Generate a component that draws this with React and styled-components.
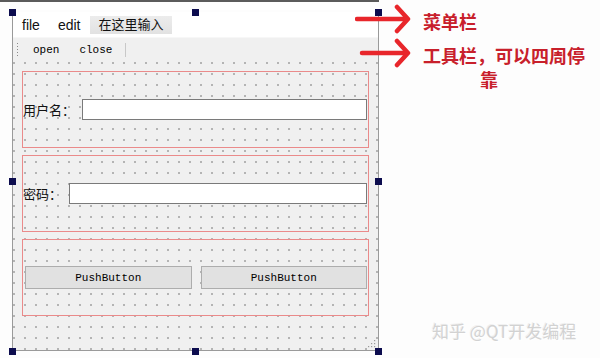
import React from "react";
import styled, { createGlobalStyle } from "styled-components";

const GlobalStyle = createGlobalStyle`
  html, body {
    margin: 0;
    padding: 0;
    background: #fdfdfd;
    font-family: "Liberation Sans", "Noto Sans CJK SC", sans-serif;
  }
`;

const handles = [
  [12, 12], [195, 12], [378, 12],
  [12, 181], [378, 181],
  [12, 351], [195, 351], [378, 351],
];

const Arrow = ({ start }) => (
  <ArrowSvg width="58" height="30" viewBox="0 0 58 30">
    <path
      d={`M${start} 15 H52 M42 3 L53 15 L42 27`}
      fill="none"
      stroke="#e8262b"
      strokeWidth="4.5"
      strokeLinecap="round"
      strokeLinejoin="round"
    />
  </ArrowSvg>
);

const Grip = () => (
  <GripSvg width="10" height="10" viewBox="0 0 10 10">
    {[[8, 1], [5, 4], [8, 4], [2, 7], [5, 7], [8, 7]].map(([x, y]) => (
      <rect key={`${x}-${y}`} x={x} y={y} width="1.2" height="1.2" fill="#9a9a9a" />
    ))}
  </GripSvg>
);

export default function App() {
  return (
    <>
      <GlobalStyle />
      <Page>
        <TopLine />
        <Stage>
          <Form>
            <MenuBar>
              <MenuItem>file</MenuItem>
              <MenuItem>edit</MenuItem>
              <MenuItem $typing>在这里输入</MenuItem>
            </MenuBar>
            <ToolBar>
              <ToolHandle />
              <ToolItem>open</ToolItem>
              <ToolItem>close</ToolItem>
              <ToolSep />
            </ToolBar>
            <Central>
              <Frame>
                <Label>用户名：</Label>
                <Input />
              </Frame>
              <Frame>
                <Label>密码：</Label>
                <Input />
              </Frame>
              <Frame $buttons>
                <PushButton>PushButton</PushButton>
                <PushButton>PushButton</PushButton>
              </Frame>
              <Grip />
            </Central>
          </Form>

          <Notes>
            <Note>
              <Arrow start={2} />
              菜单栏
            </Note>
            <Note $second>
              <Arrow start={7} />
              工具栏，可以四周停
              <Tail>靠</Tail>
            </Note>
          </Notes>

          {handles.map(([x, y]) => (
            <Handle key={`${x}-${y}`} $x={x} $y={y} />
          ))}
          <Watermark>知乎 @QT开发编程</Watermark>
        </Stage>
      </Page>
    </>
  );
}

const Page = styled.div`
  width: 600px;
  height: 358px;
  overflow: hidden;
  display: flex;
  flex-direction: column;
`;

const TopLine = styled.div`
  width: 379px;
  height: 2px;
  background: #5a5a5a;
  flex: none;
`;

const Stage = styled.div`
  position: relative;
  display: flex;
  align-items: flex-start;
  padding-left: 12px;
  flex: 1;
`;

const Form = styled.div`
  width: 365px;
  margin-top: 10px;
  border: 1px solid #9a9a9a;
  border-top: none;
  display: flex;
  flex-direction: column;
  flex: none;
`;

const MenuBar = styled.div`
  height: 25px;
  background: #fff;
  display: flex;
  align-items: center;
  gap: 2px;
  padding-left: 1px;
`;

const MenuItem = styled.div`
  height: 18px;
  line-height: 18px;
  padding: 0 8px;
  font-size: ${(p) => (p.$typing ? "13px" : "14px")};
  font-family: "Liberation Sans", "Noto Sans CJK SC", sans-serif;
  color: #111;
  background: ${(p) => (p.$typing ? "linear-gradient(#ececec, #e2e2e2)" : "transparent")};
`;

const ToolBar = styled.div`
  height: 24px;
  background: #f0f0f0;
  border-top: 1px solid #f7f7f7;
  display: flex;
  align-items: center;
  padding-left: 4px;
  box-sizing: border-box;
`;

const ToolHandle = styled.div`
  width: 1px;
  height: 14px;
  margin-right: 5px;
  background: repeating-linear-gradient(#8a8a8a 0 1px, transparent 1px 3px);
`;

const ToolItem = styled.div`
  padding: 0 10px;
  font-family: "Liberation Mono", monospace;
  font-size: 11px;
  color: #000;
`;

const ToolSep = styled.div`
  width: 1px;
  height: 14px;
  margin-left: 3px;
  background: #c8c8c8;
`;

const Central = styled.div`
  position: relative;
  height: 289px;
  box-sizing: border-box;
  padding: 10px 9px 0;
  display: flex;
  flex-direction: column;
  gap: 7px;
  background-color: #f0f0f0;
  background-image: radial-gradient(circle at 1px 1px, #b4b4b4 0.8px, transparent 1.2px);
  background-size: 11px 11px;
  background-position: 0 1px;
`;

const Frame = styled.div`
  height: 77px;
  box-sizing: border-box;
  border: 1px solid #ea8a8a;
  display: flex;
  align-items: center;
  padding: 0 1px 0 ${(p) => (p.$buttons ? "2px" : "0")};
  gap: ${(p) => (p.$buttons ? "9px" : "7px")};
`;

const Label = styled.div`
  font-family: "Noto Sans CJK SC", sans-serif;
  font-size: 13px;
  color: #111;
  white-space: nowrap;
`;

const Input = styled.div`
  flex: 1;
  height: 21px;
  box-sizing: border-box;
  background: #fff;
  border: 1px solid #7a7a7a;
`;

const PushButton = styled.div`
  flex: 1;
  height: 23px;
  box-sizing: border-box;
  background: #e1e1e1;
  border: 1px solid #adadad;
  display: flex;
  align-items: center;
  justify-content: center;
  font-family: "Liberation Mono", monospace;
  font-size: 11px;
  color: #000;
`;

const GripSvg = styled.svg`
  position: absolute;
  right: 2px;
  bottom: 1px;
`;

const Notes = styled.div`
  margin: 6px 0 0 44px;
  display: flex;
  flex-direction: column;
  gap: 8px;
`;

const Note = styled.div`
  position: relative;
  font-family: "Noto Sans CJK SC", sans-serif;
  font-weight: 700;
  font-size: 18px;
  line-height: 26px;
  color: #c8202b;
  white-space: nowrap;
  & > svg {
    top: ${(p) => (p.$second ? "-4px" : "-4px")};
  }
`;

const Tail = styled.span`
  display: block;
  margin-top: -2px;
  padding-left: 57px;
`;

const ArrowSvg = styled.svg`
  position: absolute;
  left: -68px;
`;

const Handle = styled.div`
  position: absolute;
  width: 7px;
  height: 7px;
  background: #0c0c4e;
  left: ${(p) => p.$x - 3.5}px;
  top: ${(p) => p.$y - 5.5}px;
`;

const Watermark = styled.div`
  position: absolute;
  left: 432px;
  top: 316px;
  font-family: "Noto Sans CJK SC", sans-serif;
  font-size: 17px;
  color: #d2d2d2;
  text-shadow: 1px 1px 0 #fff, -1px -1px 0 #bdbdbd33;
  white-space: nowrap;
`;
